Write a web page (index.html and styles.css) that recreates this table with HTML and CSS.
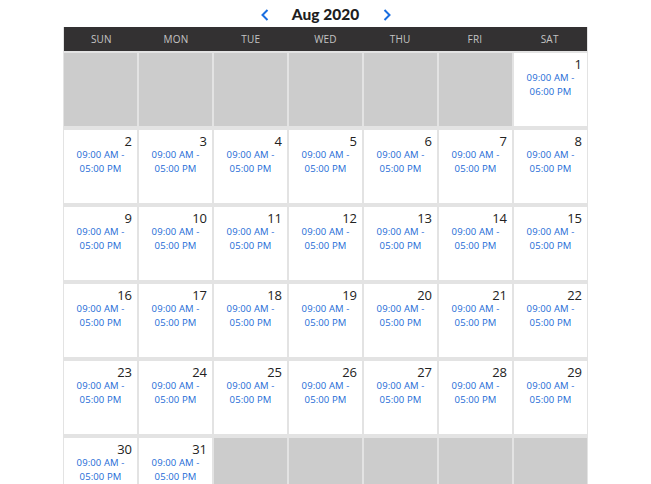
FILE: index.html
```html
<!DOCTYPE html>
<html>
<head>
<meta charset="utf-8">
<link rel="stylesheet" href="styles.css">
</head>
<body>
<div class="title-row">
  <button class="nav"><svg width="8" height="12" viewBox="0 0 8 12"><polyline points="6.5,1 1.5,6 6.5,11" fill="none" stroke="#1a6ee0" stroke-width="2"/></svg></button>
  <h1 class="month">Aug 2020</h1>
  <button class="nav"><svg width="8" height="12" viewBox="0 0 8 12"><polyline points="1.5,1 6.5,6 1.5,11" fill="none" stroke="#1a6ee0" stroke-width="2"/></svg></button>
</div>
<div class="calendar">
  <div class="head">
    <div>SUN</div><div>MON</div><div>TUE</div><div>WED</div><div>THU</div><div>FRI</div><div>SAT</div>
  </div>
  <div class="grid" id="grid"></div>
</div>
<script>
var g = document.getElementById('grid');
var html = '';
for (var i = 0; i < 6; i++) html += '<div class="cell empty"></div>';
for (var d = 1; d <= 31; d++) {
  var end = d === 1 ? '06:00 PM' : '05:00 PM';
  html += '<div class="cell"><div class="num">' + d + '</div><div class="time">09:00 AM -<br>' + end + '</div></div>';
}
for (var j = 0; j < 5; j++) html += '<div class="cell empty"></div>';
g.innerHTML = html;
</script>
</body>
</html>
```
FILE: styles.css
```css
body {
  margin: 0;
  background: #fff;
  font-family: "Open Sans", "Liberation Sans", sans-serif;
}
.title-row {
  height: 27px;
  display: flex;
  align-items: center;
  justify-content: center;
}
.nav {
  border: 0;
  background: none;
  padding: 0;
  width: 24px;
  height: 20px;
  display: flex;
  align-items: center;
  justify-content: center;
  margin-top: 3px;
}
.month {
  margin: 0 11px;
  font-family: "Lato", sans-serif;
  font-weight: 900;
  font-size: 15.5px;
  color: #1e1e1e;
  line-height: 20px;
  width: 76px;
  text-align: center;
}
.calendar {
  width: 523px;
  margin: 0 auto;
  background: #e3e3e3;
  padding: 0 1px;
}
.head {
  background: #333132;
  height: 24px;
  display: grid;
  grid-template-columns: repeat(7, 1fr);
  align-items: center;
  text-align: center;
  color: #c4c4c4;
  font-size: 10px;
  letter-spacing: 0.2px;
}
.grid {
  display: grid;
  grid-template-columns: repeat(7, 73px);
  grid-auto-rows: 73px;
  column-gap: 2px;
  row-gap: 4px;
  padding-top: 2px;
}
.cell {
  background: #fff;
  padding: 4px 5px 0 5px;
}
.cell.empty {
  background: #cccccc;
}
.num {
  text-align: right;
  font-size: 13px;
  line-height: 14px;
  color: #222;
}
.time {
  text-align: center;
  color: #1b6ad6;
  font-size: 9.5px;
  line-height: 13.5px;
  letter-spacing: 0.1px;
}
```
